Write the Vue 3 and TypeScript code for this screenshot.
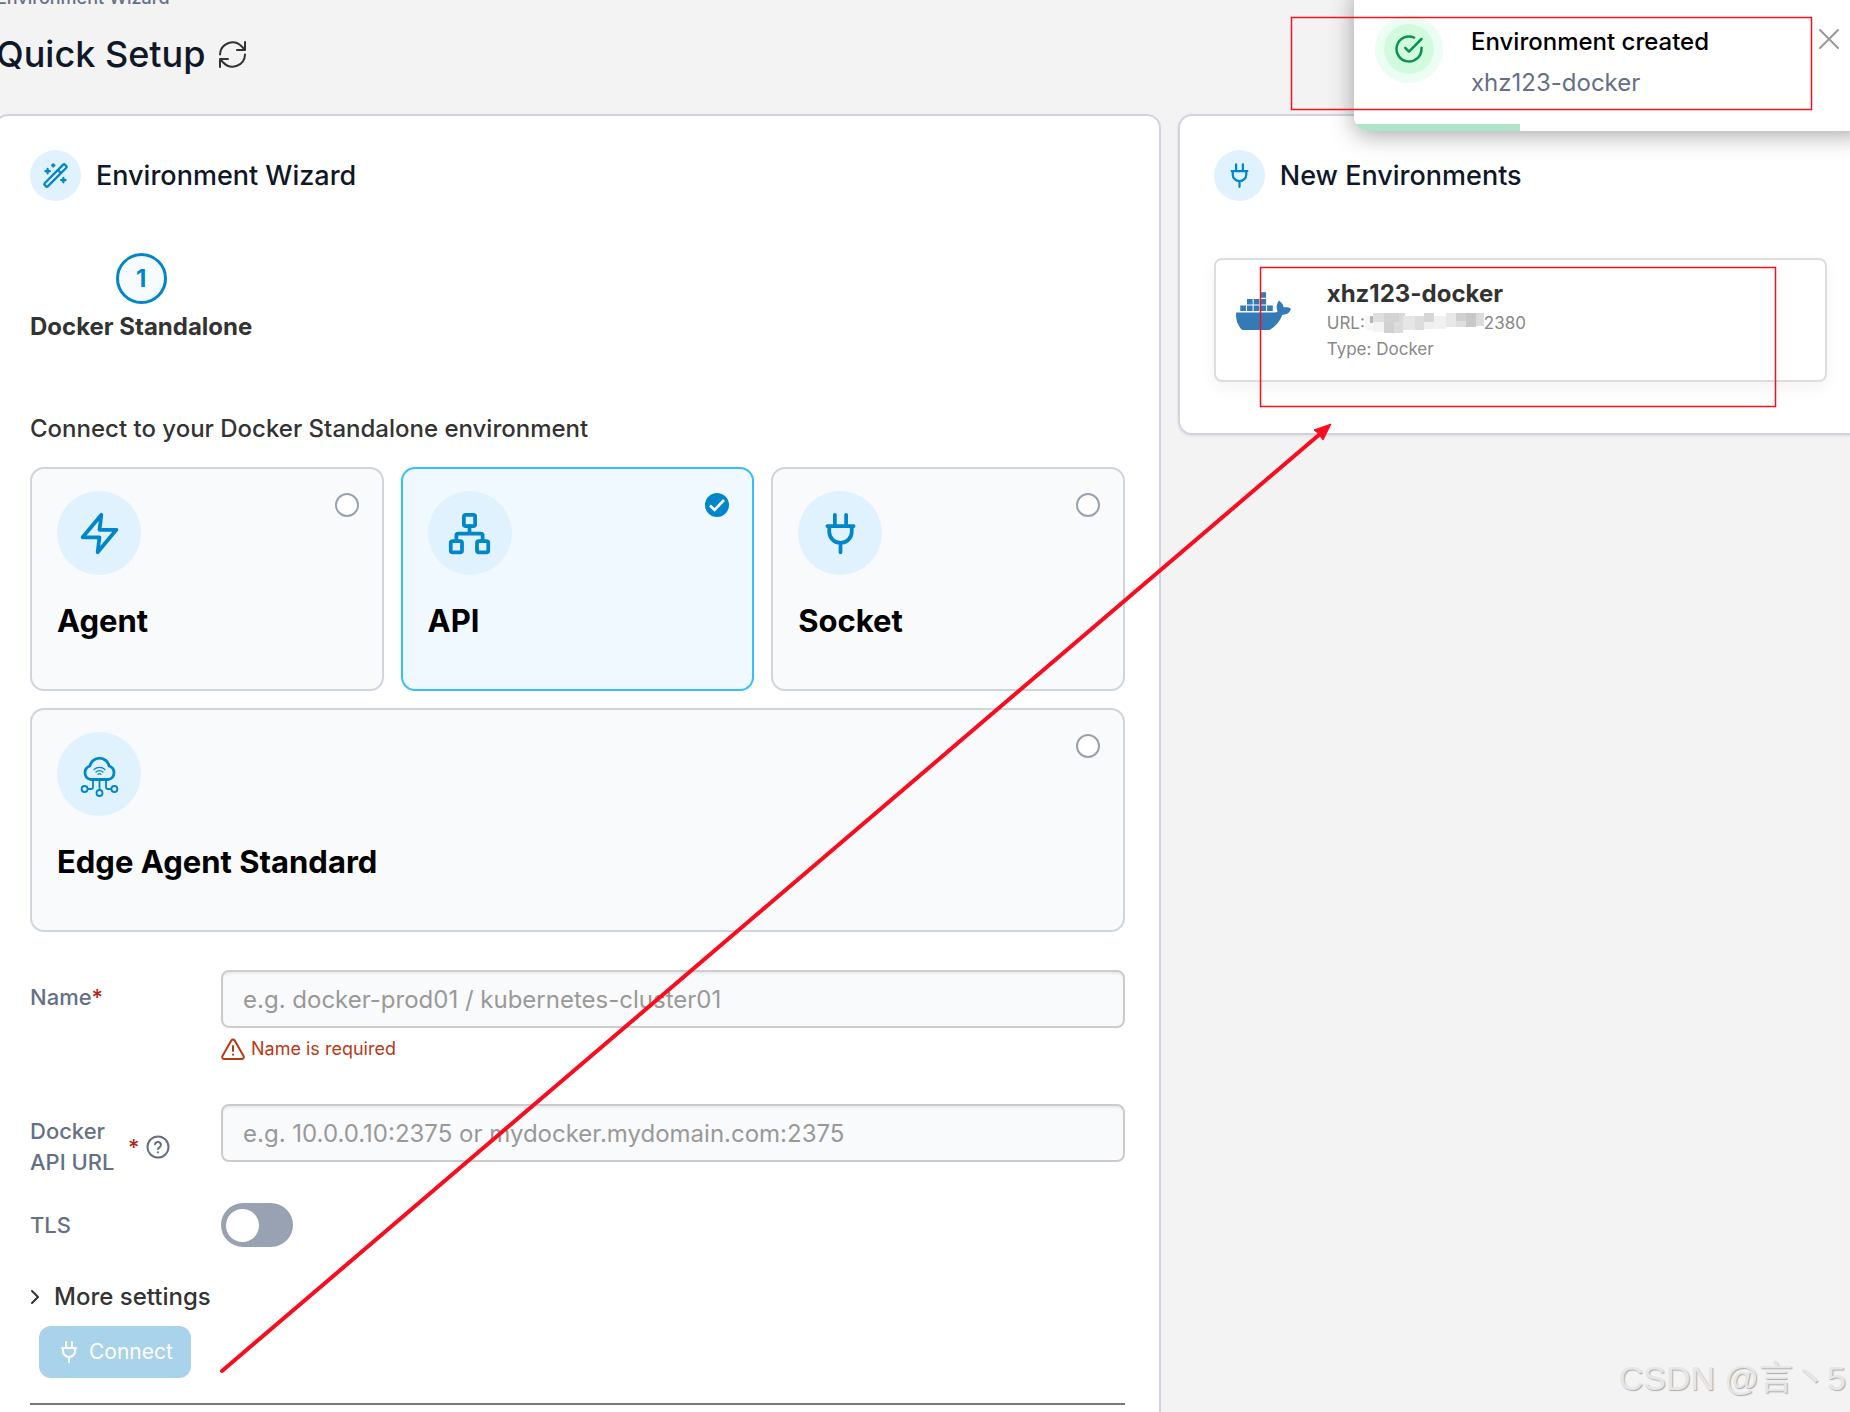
<script setup lang="ts">
import { ref } from 'vue'

interface Option {
  id: string
  title: string
  icon: 'bolt' | 'network' | 'plug' | 'edge'
  wide?: boolean
}

const options: Option[] = [
  { id: 'agent', title: 'Agent', icon: 'bolt' },
  { id: 'api', title: 'API', icon: 'network' },
  { id: 'socket', title: 'Socket', icon: 'plug' },
  { id: 'edge', title: 'Edge Agent Standard', icon: 'edge', wide: true },
]

const selected = ref('api')
const name = ref('')
const url = ref('')
const tls = ref(false)

// Pixelated patch that hides the host address: x, y, width, height, colour
const mosaic: [number, number, number, number, string][] = [
  [0, 3, 8, 14, '#f7f7f7'],
  [5, 3, 3, 7, '#b5b5b5'],
  [8, 0, 11, 9, '#dedede'],
  [19, 0, 15, 9, '#d3d3d3'],
  [8, 9, 11, 10, '#f4f4f4'],
  [19, 9, 10, 11, '#d0d0d0'],
  [29, 9, 9, 11, '#dcdcdc'],
  [34, 0, 6, 9, '#dadada'],
  [38, 3, 12, 14, '#e6e6e6'],
  [50, 3, 9, 14, '#dddddd'],
  [59, 0, 10, 9, '#d6d6d6'],
  [59, 9, 10, 7, '#efefef'],
  [69, 3, 12, 13, '#f1f1f1'],
  [81, 0, 10, 14, '#e8e8e8'],
  [91, 0, 10, 8, '#d0d0d0'],
  [101, 0, 10, 14, '#c8c8c8'],
  [91, 8, 10, 6, '#dedede'],
  [111, 0, 8, 13, '#dcdcdc'],
]
</script>

<template>
  <div class="page">
    <div class="shell">
      <header class="page-head">
        <a class="crumb" href="#">Environment Wizard</a>
        <div class="title-row">
          <h1>Quick Setup</h1>
          <button class="plain refresh" type="button" aria-label="Refresh">
            <svg width="27" height="27" viewBox="0 0 27 27" class="line" stroke-width="2">
              <path d="M1 13.5A12.5 12.5 0 0 1 22.5 5.2L25.5 8.5M26 1v8h-8M26 13.5A12.5 12.5 0 0 1 4.5 21.8L1.5 18.5M1 26v-8h8" />
            </svg>
          </button>
        </div>
      </header>

      <div class="columns">
        <main class="card">
          <div class="card-head">
            <span class="badge">
              <svg width="27" height="27" viewBox="0 0 24 24" class="line" stroke-width="2">
                <path d="m21.64 3.64-1.28-1.28a1.08 1.08 0 0 0-1.52 0L2.36 18.84a1.08 1.08 0 0 0 0 1.52l1.28 1.28a1.08 1.08 0 0 0 1.52 0L21.64 5.16a1.08 1.08 0 0 0 0-1.52ZM14 7l3 3M5 6v4M19 14v4M10 2v2M7 8H3M21 16h-4M11 3H9" />
              </svg>
            </span>
            <h2>Environment Wizard</h2>
          </div>

          <div class="step">
            <span class="step-dot">1</span>
            <span class="step-name">Docker Standalone</span>
          </div>

          <p class="lead">Connect to your Docker Standalone environment</p>

          <div class="options">
            <label
              v-for="o in options"
              :key="o.id"
              class="option"
              :class="{ wide: o.wide, on: selected === o.id }"
            >
              <span class="option-top">
                <span class="badge large">
                  <svg v-if="o.icon === 'bolt'" width="45" height="45" viewBox="0 0 24 24" class="line" stroke-width="2">
                    <path d="M13 2 3 14h9l-1 8 10-12h-9l1-8z" />
                  </svg>
                  <svg v-else-if="o.icon === 'network'" width="45" height="45" viewBox="0 0 24 24" class="line" stroke-width="2">
                    <rect x="16" y="16" width="6" height="6" rx="1" />
                    <rect x="2" y="16" width="6" height="6" rx="1" />
                    <rect x="9" y="2" width="6" height="6" rx="1" />
                    <path d="M5 16v-3a1 1 0 0 1 1-1h12a1 1 0 0 1 1 1v3M12 12V8" />
                  </svg>
                  <svg v-else-if="o.icon === 'plug'" width="45" height="45" viewBox="0 0 24 24" class="line" stroke-width="2">
                    <path d="M9 2v6M15 2v6M12 17v5M5 8h14M6 11V8h12v3a6 6 0 1 1-12 0Z" />
                  </svg>
                  <svg v-else width="45" height="45" viewBox="0 0 45 45" class="line" stroke-width="1.8">
                    <path stroke-width="2.8" d="M13.5 27.5a7 7 0 0 1-.6-13.5 9.8 9.8 0 0 1 19.2 0 7 7 0 0 1-.6 13.5z" />
                    <path stroke-width="1.2" d="M17 17.5a8 8 0 0 1 11 0M19 20a5 5 0 0 1 7 0M21 22.3a2 2 0 0 1 3 0" />
                    <path d="M16 28v7q0 2-2 2h-3M22.5 28v10M29 28v7q0 2 2 2h3" />
                    <circle cx="7.6" cy="37" r="3" />
                    <circle cx="22.5" cy="41" r="3" />
                    <circle cx="37.4" cy="37" r="3" />
                  </svg>
                </span>
                <span class="radio-wrap">
                  <input v-model="selected" type="radio" name="method" :value="o.id" />
                  <svg v-if="selected === o.id" class="tick" width="24" height="24" viewBox="0 0 24 24">
                    <path d="M5 12.5 9.5 17 19 7" fill="none" stroke="#fff" stroke-width="2.6" />
                  </svg>
                </span>
              </span>
              <span class="option-title">{{ o.title }}</span>
            </label>
          </div>

          <form class="form" @submit.prevent>
            <div class="field">
              <label class="field-label" for="env-name"><span>Name<b class="req">*</b></span></label>
              <div>
                <input id="env-name" v-model="name" class="text" type="text" placeholder="e.g. docker-prod01 / kubernetes-cluster01" />
                <p class="error">
                  <svg width="24" height="22" viewBox="0 0 24 22" class="line" stroke-width="2">
                    <path d="M10.3 2.5 1.5 18a2 2 0 0 0 1.7 3h17.6a2 2 0 0 0 1.7-3L13.7 2.5a2 2 0 0 0-3.4 0ZM12 8v5M12 16.5v.2" />
                  </svg>
                  Name is required
                </p>
              </div>
            </div>

            <div class="field second">
              <label class="field-label" for="env-url">
                <span class="two-line">Docker API URL</span>
                <b class="req">*</b>
                <svg class="line help" width="24" height="24" viewBox="0 0 24 24" stroke-width="2">
                  <circle cx="12" cy="12" r="10.5" />
                  <path d="M9 9.2a3 3 0 0 1 5.9 1c0 2-2.9 2.6-2.9 3.8M12 17.2v.2" />
                </svg>
              </label>
              <div>
                <input id="env-url" v-model="url" class="text" type="text" placeholder="e.g. 10.0.0.10:2375 or mydocker.mydomain.com:2375" />
              </div>
            </div>

            <div class="field toggle-row">
              <label for="tls">TLS</label>
              <input id="tls" v-model="tls" class="switch" type="checkbox" role="switch" />
            </div>

            <button class="plain more" type="button">
              <svg width="10" height="16" viewBox="0 0 10 16" class="line" stroke-width="2">
                <path d="m2 2 6 6-6 6" />
              </svg>
              More settings
            </button>

            <button class="connect" type="submit" disabled>
              <svg width="24" height="24" viewBox="0 0 24 24" class="line" stroke-width="2">
                <path d="M9 2v6M15 2v6M12 17v5M5 8h14M6 11V8h12v3a6 6 0 1 1-12 0Z" />
              </svg>
              Connect
            </button>
          </form>
          <hr />
        </main>

        <aside class="card side">
          <div class="card-head">
            <span class="badge">
              <svg width="27" height="27" viewBox="0 0 24 24" class="line" stroke-width="2">
                <path d="M9 2v6M15 2v6M12 17v5M5 8h14M6 11V8h12v3a6 6 0 1 1-12 0Z" />
              </svg>
            </span>
            <h2>New Environments</h2>
          </div>

          <article class="env">
            <svg class="whale" width="55" height="38" viewBox="0 30 640 412" preserveAspectRatio="none">
              <path fill="#337ab7" d="M349.9 236.3h-66.1v-59.4h66.1v59.4zm0-204.3h-66.1v60.7h66.1V32zm78.2 144.8H362v59.4h66.1v-59.4zm-156.3-72.1h-66.1v60.1h66.1v-60.1zm78.1 0h-66.1v60.1h66.1v-60.1zm276.8 100c-14.4-9.7-47.6-13.2-73.1-8.4-3.3-24-16.7-44.9-41.1-63.7l-14-9.3-9.3 14c-18.4 27.8-23.4 73.6-3.7 103.8-8.7 4.7-25.8 11.1-48.4 10.7H2.4c-8.7 50.8 5.8 116.8 44 162.1 37.1 43.9 92.7 66.2 165.4 66.2 157.4 0 273.9-72.5 328.4-204.2 21.4.4 67.6.1 91.3-45.2 1.5-2.5 6.6-13.2 8.5-17.1l-13.3-8.9zm-511.1-27.9h-66v59.4h66.1v-59.4zm78.1 0h-66.1v59.4h66.1v-59.4zm78.1 0h-66.1v59.4h66.1v-59.4zm-78.1-72.1h-66.1v60.1h66.1v-60.1z" />
            </svg>
            <div>
              <h3>xhz123-docker</h3>
              <p class="meta">
                <span>URL:</span>
                <svg class="mosaic" width="119" height="20" aria-hidden="true">
                  <rect v-for="(m, i) in mosaic" :key="i" :x="m[0]" :y="m[1]" :width="m[2]" :height="m[3]" :fill="m[4]" />
                </svg>
                <span>2380</span>
              </p>
              <p class="meta">Type: Docker</p>
            </div>
          </article>
        </aside>
      </div>
    </div>

    <section class="toast" role="status">
      <span class="toast-icon">
        <svg width="30" height="30" viewBox="0 0 24 24" class="line" stroke-width="2">
          <path d="M22 11.08V12a10 10 0 1 1-5.93-9.14M22 4 12 14.01l-3-3" />
        </svg>
      </span>
      <div class="toast-text">
        <strong>Environment created</strong>
        <span>xhz123-docker</span>
      </div>
      <button class="plain close" type="button" aria-label="Close">
        <svg width="20" height="20" viewBox="0 0 20 20" class="line" stroke-width="2">
          <path d="m1 1 18 18M19 1 1 19" />
        </svg>
      </button>
      <span class="progress"></span>
    </section>

    <svg class="marks" aria-hidden="true">
      <g fill="none" stroke="#f5101f" stroke-width="1.5">
        <rect x="1291.5" y="17.5" width="520" height="92" />
        <rect x="1260.5" y="267.5" width="515" height="139" />
      </g>
      <path d="M222 1371 1320 434" stroke="#f70d1f" stroke-width="4" stroke-linecap="round" />
      <path d="m1331 424-17 6 5 4 4 6z" fill="#f70d1f" stroke="#f70d1f" />
    </svg>

    <div class="watermark">CSDN @言丶5</div>
  </div>
</template>

<style>
body {
  background: #f3f3f3;
}
</style>

<style scoped>
.page {
  position: relative;
  height: 100vh;
  overflow: hidden;
  background: #f3f3f3;
  color: #333;
  font-family: Inter, "Noto Sans CJK SC", sans-serif;
  font-size: 24px;
  line-height: 32px;
}
.page *,
.page *::before {
  box-sizing: border-box;
}
h1, h2, h3, p {
  margin: 0;
}
.line {
  display: block;
  flex: none;
  fill: none;
  stroke: currentColor;
  stroke-linecap: round;
  stroke-linejoin: round;
}
.plain {
  display: flex;
  align-items: center;
  padding: 0;
  border: 0;
  background: none;
  color: inherit;
  font: inherit;
}
.shell {
  margin: 0 -13px 0 -6px;
}
.page-head {
  margin: -14px 0 38px 2px;
}
.crumb {
  display: block;
  color: #667085;
  font-size: 18px;
  font-weight: 500;
  line-height: 24px;
  text-decoration: none;
}
.title-row {
  display: flex;
  align-items: center;
  gap: 14px;
  margin-top: 22px;
}
h1 {
  color: #101828;
  font-size: 36px;
  font-weight: 500;
  line-height: 44px;
}
.columns {
  display: grid;
  grid-template-columns: 63fr 37fr;
  gap: 17px;
  align-items: start;
}
.card {
  padding: 34px;
  border: 2px solid #d0d5dd;
  border-radius: 14px;
  background: #fff;
}
.side {
  padding-bottom: 51px;
  box-shadow: 0 1px 3px rgba(16, 24, 40, 0.1);
}
.card-head {
  display: flex;
  align-items: center;
  gap: 15px;
}
.badge {
  display: flex;
  align-items: center;
  justify-content: center;
  width: 51px;
  height: 51px;
  border-radius: 50%;
  background: #e0f2fe;
  color: #0086c9;
}
.badge.large {
  width: 84px;
  height: 84px;
}
h2 {
  color: #101828;
  font-size: 27px;
  font-weight: 500;
}
.step {
  display: flex;
  flex-direction: column;
  align-items: center;
  gap: 7px;
  width: fit-content;
  margin-top: 52px;
  font-weight: 700;
}
.step-dot {
  display: flex;
  align-items: center;
  justify-content: center;
  width: 51px;
  height: 51px;
  border: 3px solid #0086c9;
  border-radius: 50%;
  background: #f5fbff;
  color: #0086c9;
}
.lead {
  margin-top: 70px;
  font-weight: 500;
}
.options {
  display: grid;
  grid-template-columns: repeat(3, 1fr);
  gap: 17px;
  margin-top: 22px;
}
.option {
  display: flex;
  flex-direction: column;
  gap: 26px;
  height: 224px;
  padding: 22px 23px 22px 25px;
  border: 2px solid #d0d5dd;
  border-radius: 14px;
  background: #f9fafb;
}
.option.on {
  border-color: #36bffa;
  background: #f0f9ff;
}
.option.wide {
  grid-column: 1 / -1;
}
.option-top {
  display: flex;
  justify-content: space-between;
}
.radio-wrap {
  position: relative;
  width: 24px;
  height: 24px;
  margin-top: 2px;
}
.radio-wrap input {
  display: block;
  width: 24px;
  height: 24px;
  margin: 0;
  border: 2px solid #98a2b3;
  border-radius: 50%;
  appearance: none;
  background: #fff;
}
.radio-wrap input:checked {
  border-color: #0086c9;
  background: #0086c9;
}
.tick {
  position: absolute;
  inset: 0;
}
.option-title {
  color: #000;
  font-size: 31px;
  font-weight: 700;
  line-height: 40px;
}
.form {
  margin-top: 38px;
  color: #667085;
}
.field {
  display: grid;
  grid-template-columns: 191px 1fr;
  align-items: start;
  font-size: 22px;
  font-weight: 500;
  line-height: 31px;
}
.second {
  margin-top: 44px;
}
.field-label {
  display: flex;
  align-items: center;
  padding-top: 12px;
}
.req {
  color: #b42318;
  font-weight: 500;
}
.two-line {
  width: 98px;
}
.help {
  margin-left: 7px;
}
.text {
  display: block;
  width: 100%;
  height: 58px;
  padding: 0 20px;
  border: 2px solid #ccc;
  border-radius: 8px;
  background: #f9fafb;
  box-shadow: inset 0 2px 2px rgba(0, 0, 0, 0.06);
  color: #333;
  font: inherit;
  font-size: 24px;
  font-weight: 400;
}
.text::placeholder {
  color: #999;
}
.error {
  display: flex;
  align-items: center;
  gap: 6px;
  margin-top: 10px;
  color: #b93815;
  font-size: 18px;
  font-weight: 400;
  line-height: 22px;
}
.toggle-row {
  align-items: center;
  margin-top: 25px;
}
.switch {
  display: flex;
  align-items: center;
  width: 72px;
  height: 44px;
  margin: 0;
  padding: 0 5px;
  border-radius: 22px;
  appearance: none;
  background: #98a2b3;
}
.switch::before {
  width: 33px;
  height: 33px;
  border-radius: 50%;
  background: #fff;
  content: "";
}
.switch:checked {
  justify-content: flex-end;
  background: #0086c9;
}
.more {
  gap: 14px;
  margin-top: 34px;
  color: #333;
  font-weight: 500;
}
.connect {
  display: flex;
  align-items: center;
  gap: 8px;
  height: 52px;
  margin: 13px 0 0 9px;
  padding: 0 18px;
  border: 0;
  border-radius: 12px;
  background: #a9d2eb;
  color: #fff;
  font: inherit;
  font-size: 21px;
}
hr {
  height: 2px;
  margin: 25px 0 0;
  border: 0;
  background: #777;
}
.env {
  display: flex;
  align-items: flex-start;
  gap: 36px;
  margin-top: 57px;
  padding: 18px 20px;
  border: 2px solid #ddd;
  border-radius: 8px;
  background: #fff;
  box-shadow: 0 6px 16px rgba(0, 0, 0, 0.05);
}
.whale {
  display: block;
  flex: none;
  margin-top: 14px;
}
h3 {
  font-size: 24px;
  font-weight: 700;
}
.meta {
  display: flex;
  align-items: center;
  color: #888;
  font-size: 17px;
  line-height: 26px;
}
.toast {
  position: absolute;
  top: -12px;
  right: -20px;
  display: flex;
  align-items: flex-start;
  gap: 37px;
  width: 516px;
  height: 143px;
  padding: 36px 31px 32px 30px;
  overflow: hidden;
  border-radius: 14px;
  background: #fff;
  box-shadow: 0 4px 24px rgba(0, 0, 0, 0.35);
}
.toast-icon {
  display: flex;
  flex: none;
  align-items: center;
  justify-content: center;
  width: 50px;
  height: 50px;
  border-radius: 50%;
  background: #d1fadf;
  box-shadow: 0 0 0 9px #ecfdf3;
  color: #099250;
}
.toast-text {
  display: flex;
  flex: 1;
  flex-direction: column;
  gap: 9px;
  padding-top: 2px;
  color: #667085;
}
.toast-text strong {
  color: #000;
  font-weight: 500;
}
.close {
  margin-top: 5px;
  color: #999;
}
.progress {
  position: absolute;
  bottom: 0;
  left: 0;
  width: 166px;
  height: 7px;
  background: #aee4c8;
}
.marks {
  position: absolute;
  inset: 0;
  width: 100%;
  height: 100%;
  pointer-events: none;
}
.watermark {
  position: absolute;
  right: 4px;
  bottom: 14px;
  color: #e6e6e6;
  font-family: "Liberation Sans", "Noto Sans CJK SC", sans-serif;
  font-size: 34px;
  line-height: 40px;
  text-shadow: 1px 1px 1px #aaa;
}
</style>
